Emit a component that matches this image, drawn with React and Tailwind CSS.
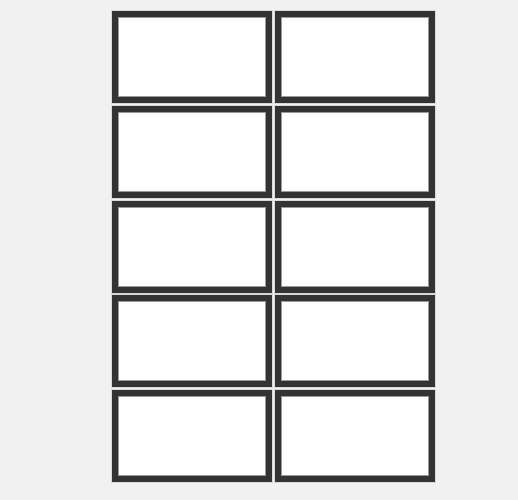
export default function App() {
  const cells = Array.from({ length: 10 })
  return (
    <div className="min-h-[500px] w-full bg-[#f1f1f1] pt-[11px] pl-[112px]">
      <div className="grid w-[323px] grid-cols-[160px_160px] auto-rows-[92px] gap-x-[3px] gap-y-[2.75px]">
        {cells.map((_, i) => (
          <div
            key={i}
            className="border-[6px] border-[#333] bg-white shadow-[0_0_0_1px_#d8d8d8,inset_0_0_0_1px_#9a9a9a]"
          />
        ))}
      </div>
    </div>
  )
}
